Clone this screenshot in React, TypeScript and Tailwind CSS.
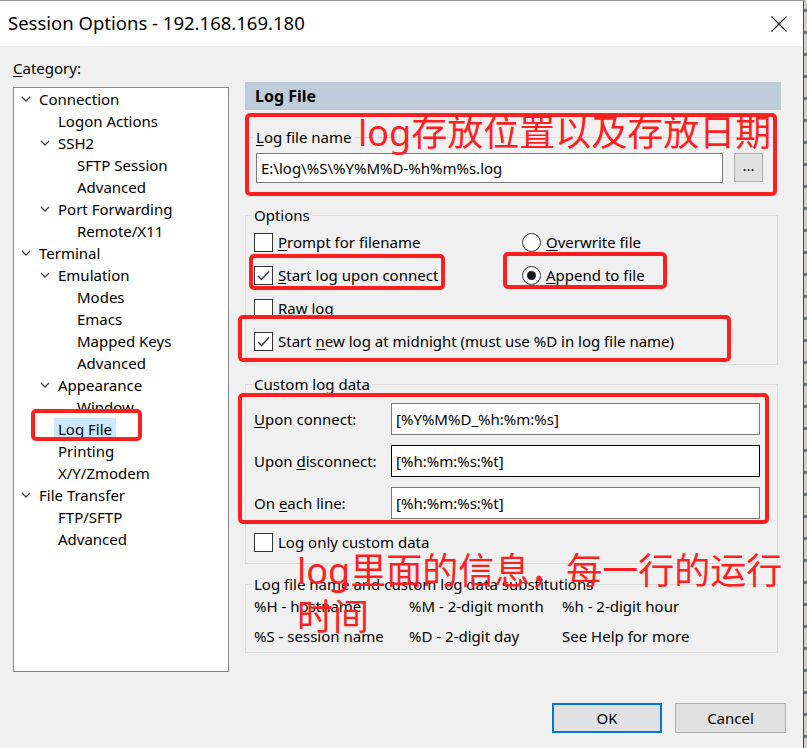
import React from "react";

const Chevron = () => (
  <svg width="10" height="6" viewBox="0 0 10 6" className="block">
    <path d="M1 1 L5 5 L9 1" fill="none" stroke="#404040" strokeWidth="1.3" />
  </svg>
);

type Item = { label: string; level: number; chevron?: boolean; selected?: boolean };

const items: Item[] = [
  { label: "Connection", level: 0, chevron: true },
  { label: "Logon Actions", level: 1 },
  { label: "SSH2", level: 1, chevron: true },
  { label: "SFTP Session", level: 2 },
  { label: "Advanced", level: 2 },
  { label: "Port Forwarding", level: 1, chevron: true },
  { label: "Remote/X11", level: 2 },
  { label: "Terminal", level: 0, chevron: true },
  { label: "Emulation", level: 1, chevron: true },
  { label: "Modes", level: 2 },
  { label: "Emacs", level: 2 },
  { label: "Mapped Keys", level: 2 },
  { label: "Advanced", level: 2 },
  { label: "Appearance", level: 1, chevron: true },
  { label: "Window", level: 2 },
  { label: "Log File", level: 1, selected: true },
  { label: "Printing", level: 1 },
  { label: "X/Y/Zmodem", level: 1 },
  { label: "File Transfer", level: 0, chevron: true },
  { label: "FTP/SFTP", level: 1 },
  { label: "Advanced", level: 1 },
];

const padFor = (l: number) => (l === 0 ? "pl-[7px]" : l === 1 ? "pl-[26px]" : "pl-[45px]");

const CheckBox = ({ checked, children }: { checked?: boolean; children: React.ReactNode }) => (
  <div className="flex items-center h-[33px]">
    <div className="w-[19px] h-[19px] border border-[#333333] bg-white flex items-center justify-center shrink-0">
      {checked && (
        <svg width="17" height="17" viewBox="0 0 17 17">
          <path d="M3 9 L6.5 12.5 L14 4.5" fill="none" stroke="#333333" strokeWidth="1.4" />
        </svg>
      )}
    </div>
    <span className="ml-[5px] whitespace-nowrap">{children}</span>
  </div>
);

const Radio = ({ checked, children }: { checked?: boolean; children: React.ReactNode }) => (
  <div className="flex items-center h-[33px]">
    <div className="w-[19px] h-[19px] rounded-full border border-[#333333] bg-white flex items-center justify-center shrink-0">
      {checked && <div className="w-[9px] h-[9px] rounded-full bg-[#1a1a1a]" />}
    </div>
    <span className="ml-[5px] whitespace-nowrap">{children}</span>
  </div>
);

const U = ({ children }: { children: React.ReactNode }) => <span className="underline underline-offset-[2px]">{children}</span>;

export default function App() {
  return (
    <div className="relative w-[807px] h-[748px] flex overflow-hidden font-['Noto_Sans',sans-serif] text-[15px] text-black">
      <div className="w-[804px] h-full flex flex-col border-t border-t-[#9a9a9a] border-r border-r-[#4a4a4a]">
        {/* Title bar */}
        <div className="h-[45px] bg-white flex items-center justify-between pl-[8px] pr-[16px] shrink-0">
          <span className="text-[18.5px] leading-none">Session Options - 192.168.169.180</span>
          <svg width="16" height="16" viewBox="0 0 16 16">
            <path d="M0.5 0.5 L15.5 15.5 M15.5 0.5 L0.5 15.5" stroke="#111" strokeWidth="1.1" />
          </svg>
        </div>
        {/* Body */}
        <div className="flex-1 bg-[#f0f0f0] flex flex-col">
          <div className="flex">
            {/* Left */}
            <div className="ml-[13px] w-[216px] pt-[11px]">
              <div className="h-[22px] leading-[22px]">
                <U>C</U>ategory:
              </div>
              <div className="mt-[8px] h-[585px] border border-[#828790] bg-white">
                {items.map((it, i) => (
                  <div key={i} className={`h-[22px] flex items-center ${padFor(it.level)}`}>
                    <div className="w-[18px] shrink-0">{it.chevron && <Chevron />}</div>
                    {it.selected ? (
                      <span className="-ml-[4px] px-[4px] h-[22px] leading-[22px] bg-[#cce8ff]">{it.label}</span>
                    ) : (
                      <span className="whitespace-nowrap">{it.label}</span>
                    )}
                  </div>
                ))}
              </div>
            </div>
            {/* Right */}
            <div className="ml-[16px] w-[536px] pt-[36px]">
              <div className="h-[28px] bg-[#bfcddb] flex items-center pl-[10px] font-bold text-[16px]">Log File</div>

              <fieldset className="mt-[16px] w-[532px] border border-[#dcdcdc] pl-[10px] pr-[8px] pb-[9px]">
                <legend className="-ml-[2px] px-[2px] h-[22px] leading-[22px]">
                  <U>L</U>og file name
                </legend>
                <div className="flex items-start mt-[5px]">
                  <div className="w-[467px] h-[30px] border border-[#7a7a7a] bg-white flex items-center pl-[4px] whitespace-nowrap">
                    E:\log\%S\%Y%M%D-%h%m%s.log
                  </div>
                  <div className="ml-[11px] w-[29px] h-[29px] border border-[#adadad] bg-[#e1e1e1] flex items-center justify-center leading-none pb-[4px]">
                    ...
                  </div>
                </div>
              </fieldset>

              <fieldset className="mt-[11px] w-[533px] border border-[#dcdcdc] pl-[8px] pb-[6px]">
                <legend className="-ml-[2px] px-[2px] h-[22px] leading-[22px]">Options</legend>
                <div className="grid grid-cols-[268px_1fr]">
                  <CheckBox>
                    <U>P</U>rompt for filename
                  </CheckBox>
                  <Radio>
                    <U>O</U>verwrite file
                  </Radio>
                  <CheckBox checked>
                    <U>S</U>tart log upon connect
                  </CheckBox>
                  <Radio checked>
                    <U>A</U>ppend to file
                  </Radio>
                  <CheckBox>Raw log</CheckBox>
                  <div />
                  <div className="col-span-2">
                    <CheckBox checked>
                      Start <U>n</U>ew log at midnight (must use %D in log file name)
                    </CheckBox>
                  </div>
                </div>
              </fieldset>

              <fieldset className="mt-[8px] w-[533px] border border-[#dcdcdc] pl-[8px] pb-[4px]">
                <legend className="-ml-[2px] px-[2px] h-[22px] leading-[22px]">Custom log data</legend>
                <div className="grid grid-cols-[137px_369px] gap-y-[10px] pt-[8px] items-center">
                  <div>
                    <U>U</U>pon connect:
                  </div>
                  <div className="h-[32px] border border-[#7a7a7a] bg-white flex items-center pl-[4px]">[%Y%M%D_%h:%m:%s]</div>
                  <div>
                    Upon <U>d</U>isconnect:
                  </div>
                  <div className="h-[32px] border border-[#000000] bg-white flex items-center pl-[4px]">[%h:%m:%s:%t]</div>
                  <div>
                    On <U>e</U>ach line:
                  </div>
                  <div className="h-[32px] border border-[#7a7a7a] bg-white flex items-center pl-[4px]">[%h:%m:%s:%t]</div>
                </div>
                <div className="mt-[7px]">
                  <CheckBox>
                    Lo<U>g</U> only custom data
                  </CheckBox>
                </div>
              </fieldset>

              <fieldset className="mt-[9px] w-[533px] border border-[#dcdcdc] pl-[8px] pb-[5px]">
                <legend className="-ml-[2px] px-[2px] h-[22px] leading-[22px] whitespace-nowrap">
                  Log file name and custom log data substitutions
                </legend>
                <div className="grid grid-cols-[155px_153px_1fr] gap-y-[8px]">
                  <div className="h-[22px] leading-[22px] whitespace-nowrap">%H - hostname</div>
                  <div className="h-[22px] leading-[22px] whitespace-nowrap">%M - 2-digit month</div>
                  <div className="h-[22px] leading-[22px] whitespace-nowrap">%h - 2-digit hour</div>
                  <div className="h-[22px] leading-[22px] whitespace-nowrap">%S - session name</div>
                  <div className="h-[22px] leading-[22px] whitespace-nowrap">%D - 2-digit day</div>
                  <div className="h-[22px] leading-[22px] whitespace-nowrap">See Help for more</div>
                </div>
              </fieldset>
            </div>
          </div>
          {/* Buttons */}
          <div className="flex justify-end gap-[13px] pr-[17px] mt-[31px]">
            <div className="w-[110px] h-[30px] border-2 border-[#0078d7] bg-[#e1e1e1] flex items-center justify-center">OK</div>
            <div className="w-[111px] h-[30px] border border-[#adadad] bg-[#e1e1e1] flex items-center justify-center">Cancel</div>
          </div>
        </div>
      </div>
      {/* desktop texture strip */}
      <div className="w-[3px] h-full bg-[repeating-linear-gradient(180deg,#d6cfbf_0px,#d6cfbf_9px,#6a767a_9px,#6a767a_12px,#d6cfbf_12px,#d6cfbf_22px)]" />

      {/* Red annotations */}
      <div className="absolute left-[245px] top-[113px] w-[532px] h-[83px] border-4 border-[#ff1f1f] rounded-[5px]" />
      <div className="absolute left-[249px] top-[254px] w-[196px] h-[36px] border-4 border-[#ff1f1f] rounded-[5px]" />
      <div className="absolute left-[503px] top-[252px] w-[164px] h-[37px] border-4 border-[#ff1f1f] rounded-[5px]" />
      <div className="absolute left-[238px] top-[315px] w-[493px] h-[47px] border-4 border-[#ff1f1f] rounded-[5px]" />
      <div className="absolute left-[238px] top-[393px] w-[531px] h-[131px] border-4 border-[#ff1f1f] rounded-[5px]" />
      <div className="absolute left-[31px] top-[409px] w-[111px] h-[32px] border-4 border-[#ff1f1f] rounded-[5px]" />

      <div className="absolute left-[358px] top-[115px] text-[36px] leading-none text-[#ff1f1f] whitespace-nowrap font-['Noto_Sans','Noto_Sans_CJK_SC',sans-serif]">
        log存放位置以及存放日期
      </div>
      <div className="absolute left-[297px] top-[548px] text-[36px] leading-[46px] text-[#ff1f1f] whitespace-nowrap font-['Noto_Sans','Noto_Sans_CJK_SC',sans-serif]">
        log里面的信息，每一行的运行
        <br />
        时间
      </div>
    </div>
  );
}
